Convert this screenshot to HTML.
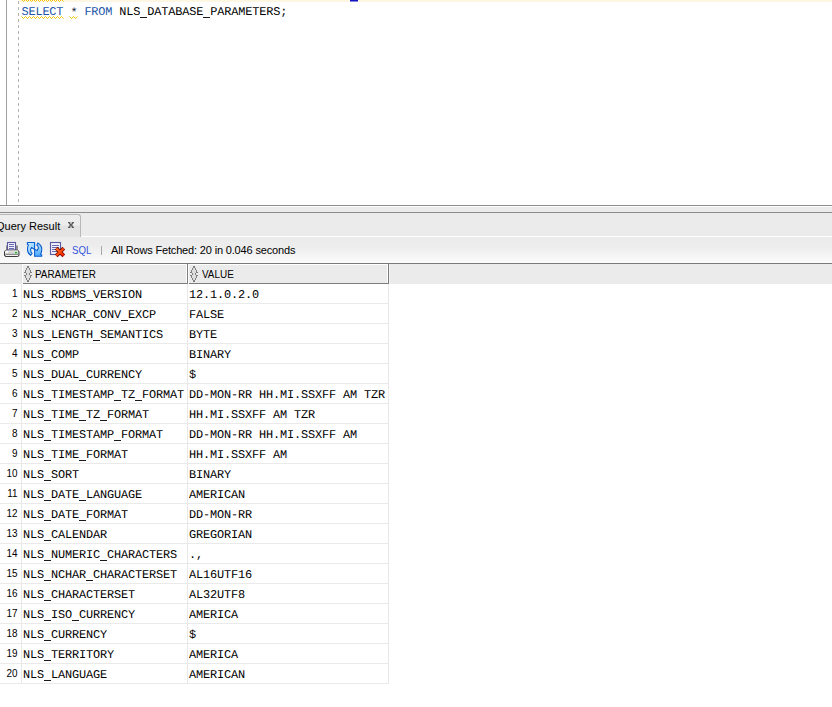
<!DOCTYPE html>
<html><head><meta charset="utf-8"><style>
html,body{margin:0;padding:0;}
body{width:832px;height:707px;overflow:hidden;background:#fff;position:relative;font-family:"Liberation Sans",sans-serif;}
.a{position:absolute;}
.mono{font-family:"Liberation Mono",monospace;}
#gutline{left:6px;top:0;width:1px;height:205px;background:#a0a0a0;}
#dash{left:18px;top:0;width:1px;height:205px;background:repeating-linear-gradient(to bottom,transparent 0 1px,#b4b4b4 1px 4px,transparent 4px 6px);}
#curline{left:19px;top:0;width:813px;height:2px;background:#fdf6e3;}
#code{left:21.4px;top:4px;font-size:11.9px;line-height:16px;white-space:pre;color:#000;}
.kw{color:#2255a8;}
#sep1{left:0;top:205px;width:832px;height:1px;background:#8c8c8c;}
#sep1w{left:0;top:206px;width:832px;height:1px;background:#fff;}
#sep1g{left:0;top:207px;width:832px;height:5px;background:#ebebeb;}
#sep2{left:0;top:212px;width:832px;height:1px;background:#8c8c8c;}
#tabstrip{left:0;top:213px;width:832px;height:23px;background:#ebebeb;}
#tabstripw{left:0;top:236px;width:832px;height:1px;background:#fff;}
#tab{left:-10px;top:214px;width:91px;height:23px;border:1px solid #b8b8b8;border-bottom:none;border-top-right-radius:3px;background:linear-gradient(to bottom,#eeeeee 0,#ececec 10px,#e2e2e2 11px,#e4e4e4 100%);box-sizing:border-box;}
#tabtext{left:-4px;top:219px;font-size:11px;line-height:14px;color:#000;white-space:pre;}
#toolbar{left:0;top:237px;width:832px;height:26px;background:linear-gradient(to bottom,#ebebeb 0,#ededed 35%,#fbfbfb 100%);}
#tbline{left:0;top:263px;width:832px;height:1px;background:#7a7a7a;}
#sqltxt{left:72px;top:243px;font-size:11px;line-height:14px;color:#3352dc;transform:scaleX(0.88);transform-origin:0 0;}
#pipe{left:101px;top:246px;width:1px;height:9px;background:#a8a8a8;}
#fetched{left:111px;top:243px;font-size:11px;line-height:14px;color:#000;white-space:pre;letter-spacing:-0.16px;}
.us{display:inline-block;width:7px;height:1px;background:#1a1a1a;vertical-align:baseline;position:relative;top:3px;letter-spacing:0;}
.c1,.c2,#code{text-rendering:geometricPrecision;}
.c1,.c2,#code{letter-spacing:-0.140px;}
#hdrbg{left:0;top:264px;width:832px;height:20px;background:#ebebeb;}
.htxt{top:267px;font-size:11px;line-height:14px;color:#000;transform:scaleX(0.9);transform-origin:0 0;white-space:pre;}
.rn{position:absolute;left:0;width:17.5px;text-align:right;height:20px;line-height:20px;font-size:11px;color:#000;margin-top:-1px;transform:scaleX(0.9);transform-origin:100% 0;}
.c1,.c2{position:absolute;font-family:"Liberation Mono",monospace;font-size:11.9px;line-height:20px;height:20px;color:#000;white-space:pre;}
.c1{left:23px;}
.c2{left:189px;}
.hl{position:absolute;left:0;width:389px;height:1px;background:#eaeaea;}
.vl{position:absolute;top:284px;width:1px;height:400px;background:#e8e8e8;}
</style></head><body>
<div class="a" id="curline"></div>
<div class="a" id="gutline"></div>
<div class="a" id="dash"></div>
<svg class="a" style="left:0;top:0" width="832" height="30">
<polyline fill="none" stroke="#f8bf00" stroke-width="1" points="21.5,-0.5 23.5,1.5 25.5,-0.5 27.5,1.5 29.5,-0.5 31.5,1.5 33.5,-0.5 35.5,1.5 37.5,-0.5 39.5,1.5 41.5,-0.5 43.5,1.5 45.5,-0.5 47.5,1.5 49.5,-0.5 51.5,1.5 53.5,-0.5 55.5,1.5 57.5,-0.5 59.5,1.5 61.5,-0.5 63.5,1.5"/>
<polyline fill="none" stroke="#f8bf00" stroke-width="1" points="21.5,16.5 23.5,18.5 25.5,16.5 27.5,18.5 29.5,16.5 31.5,18.5 33.5,16.5 35.5,18.5 37.5,16.5 39.5,18.5 41.5,16.5 43.5,18.5 45.5,16.5 47.5,18.5 49.5,16.5 51.5,18.5 53.5,16.5 55.5,18.5 57.5,16.5 59.5,18.5 61.5,16.5 63.5,18.5"/>
<polyline fill="none" stroke="#f8bf00" stroke-width="1" points="69.5,16.5 71.5,18.5 73.5,16.5 75.5,18.5 77.5,16.5"/>
<rect x="350" y="0" width="8" height="1.5" fill="#1414c8"/>
</svg>
<div class="a mono" id="code"><span class="kw">SELECT</span> <span style="position:relative;top:1px;color:#1a1a40">*</span> <span class="kw">FROM</span> NLS<span class="us"></span>DATABASE<span class="us"></span>PARAMETERS;</div>
<div class="a" id="sep1"></div><div class="a" id="sep1w"></div><div class="a" id="sep1g"></div><div class="a" id="sep2"></div>
<div class="a" id="tabstrip"></div><div class="a" id="tabstripw"></div>
<div class="a" id="tab"></div>
<div class="a" id="tabtext">Query Result</div>
<div class="a" id="toolbar"></div>
<div class="a" id="tbline"></div>
<div class="a" id="sqltxt">SQL</div>
<div class="a" id="pipe"></div>
<div class="a" id="fetched">All Rows Fetched: 20 in 0.046 seconds</div>
<div class="a" id="hdrbg"></div>
<div class="a" style="left:21px;top:264px;width:1px;height:20px;background:#e2e2e2"></div>
<div class="a" style="left:22px;top:264px;width:165px;height:1px;background:#fff"></div><div class="a" style="left:22px;top:264px;width:1px;height:20px;background:#fff"></div><div class="a" style="left:186px;top:264px;width:1px;height:19px;background:#fff"></div><div class="a" style="left:187px;top:264px;width:1px;height:20px;background:#7d7d7d"></div><div class="a" style="left:23px;top:283px;width:165px;height:1px;background:#7d7d7d"></div>
<div class="a" style="left:188px;top:264px;width:200px;height:1px;background:#fff"></div><div class="a" style="left:188px;top:264px;width:1px;height:20px;background:#fff"></div><div class="a" style="left:387px;top:264px;width:1px;height:19px;background:#fff"></div><div class="a" style="left:388px;top:264px;width:1px;height:20px;background:#7d7d7d"></div><div class="a" style="left:189px;top:283px;width:200px;height:1px;background:#7d7d7d"></div>
<div class="a" style="left:389px;top:264px;width:1px;height:20px;background:#f4f4f4"></div>
<div class="a htxt" style="left:35px">PARAMETER</div>
<div class="a htxt" style="left:202px">VALUE</div>
<div class="hl" style="top:303px"></div><div class="hl" style="top:323px"></div><div class="hl" style="top:343px"></div><div class="hl" style="top:363px"></div><div class="hl" style="top:383px"></div><div class="hl" style="top:403px"></div><div class="hl" style="top:423px"></div><div class="hl" style="top:443px"></div><div class="hl" style="top:463px"></div><div class="hl" style="top:483px"></div><div class="hl" style="top:503px"></div><div class="hl" style="top:523px"></div><div class="hl" style="top:543px"></div><div class="hl" style="top:563px"></div><div class="hl" style="top:583px"></div><div class="hl" style="top:603px"></div><div class="hl" style="top:623px"></div><div class="hl" style="top:643px"></div><div class="hl" style="top:663px"></div><div class="hl" style="top:683px"></div>
<div class="vl" style="left:21px"></div><div class="vl" style="left:187px"></div><div class="vl" style="left:388px"></div>
<div class="rn" style="top:284px">1</div><div class="c1" style="top:285px">NLS<span class="us"></span>RDBMS<span class="us"></span>VERSION</div><div class="c2" style="top:285px">12.1.0.2.0</div><div class="rn" style="top:304px">2</div><div class="c1" style="top:305px">NLS<span class="us"></span>NCHAR<span class="us"></span>CONV<span class="us"></span>EXCP</div><div class="c2" style="top:305px">FALSE</div><div class="rn" style="top:324px">3</div><div class="c1" style="top:325px">NLS<span class="us"></span>LENGTH<span class="us"></span>SEMANTICS</div><div class="c2" style="top:325px">BYTE</div><div class="rn" style="top:344px">4</div><div class="c1" style="top:345px">NLS<span class="us"></span>COMP</div><div class="c2" style="top:345px">BINARY</div><div class="rn" style="top:364px">5</div><div class="c1" style="top:365px">NLS<span class="us"></span>DUAL<span class="us"></span>CURRENCY</div><div class="c2" style="top:365px">$</div><div class="rn" style="top:384px">6</div><div class="c1" style="top:385px">NLS<span class="us"></span>TIMESTAMP<span class="us"></span>TZ<span class="us"></span>FORMAT</div><div class="c2" style="top:385px">DD-MON-RR HH.MI.SSXFF AM TZR</div><div class="rn" style="top:404px">7</div><div class="c1" style="top:405px">NLS<span class="us"></span>TIME<span class="us"></span>TZ<span class="us"></span>FORMAT</div><div class="c2" style="top:405px">HH.MI.SSXFF AM TZR</div><div class="rn" style="top:424px">8</div><div class="c1" style="top:425px">NLS<span class="us"></span>TIMESTAMP<span class="us"></span>FORMAT</div><div class="c2" style="top:425px">DD-MON-RR HH.MI.SSXFF AM</div><div class="rn" style="top:444px">9</div><div class="c1" style="top:445px">NLS<span class="us"></span>TIME<span class="us"></span>FORMAT</div><div class="c2" style="top:445px">HH.MI.SSXFF AM</div><div class="rn" style="top:464px">10</div><div class="c1" style="top:465px">NLS<span class="us"></span>SORT</div><div class="c2" style="top:465px">BINARY</div><div class="rn" style="top:484px">11</div><div class="c1" style="top:485px">NLS<span class="us"></span>DATE<span class="us"></span>LANGUAGE</div><div class="c2" style="top:485px">AMERICAN</div><div class="rn" style="top:504px">12</div><div class="c1" style="top:505px">NLS<span class="us"></span>DATE<span class="us"></span>FORMAT</div><div class="c2" style="top:505px">DD-MON-RR</div><div class="rn" style="top:524px">13</div><div class="c1" style="top:525px">NLS<span class="us"></span>CALENDAR</div><div class="c2" style="top:525px">GREGORIAN</div><div class="rn" style="top:544px">14</div><div class="c1" style="top:545px">NLS<span class="us"></span>NUMERIC<span class="us"></span>CHARACTERS</div><div class="c2" style="top:545px">.,</div><div class="rn" style="top:564px">15</div><div class="c1" style="top:565px">NLS<span class="us"></span>NCHAR<span class="us"></span>CHARACTERSET</div><div class="c2" style="top:565px">AL16UTF16</div><div class="rn" style="top:584px">16</div><div class="c1" style="top:585px">NLS<span class="us"></span>CHARACTERSET</div><div class="c2" style="top:585px">AL32UTF8</div><div class="rn" style="top:604px">17</div><div class="c1" style="top:605px">NLS<span class="us"></span>ISO<span class="us"></span>CURRENCY</div><div class="c2" style="top:605px">AMERICA</div><div class="rn" style="top:624px">18</div><div class="c1" style="top:625px">NLS<span class="us"></span>CURRENCY</div><div class="c2" style="top:625px">$</div><div class="rn" style="top:644px">19</div><div class="c1" style="top:645px">NLS<span class="us"></span>TERRITORY</div><div class="c2" style="top:645px">AMERICA</div><div class="rn" style="top:664px">20</div><div class="c1" style="top:665px">NLS<span class="us"></span>LANGUAGE</div><div class="c2" style="top:665px">AMERICAN</div>

<svg class="a" style="left:0;top:0" width="832" height="707" viewBox="0 0 832 707">
<defs>
<linearGradient id="pbody" x1="0" y1="0" x2="0" y2="1"><stop offset="0" stop-color="#eeeeee"/><stop offset="0.6" stop-color="#c4c4c4"/><stop offset="1" stop-color="#b0b0b0"/></linearGradient>
<linearGradient id="rblue" x1="0" y1="0" x2="1" y2="1"><stop offset="0" stop-color="#d6efff"/><stop offset="1" stop-color="#6cc0ff"/></linearGradient>
<linearGradient id="rblue2" x1="0" y1="0" x2="0" y2="1"><stop offset="0" stop-color="#b8e0ff"/><stop offset="1" stop-color="#4aa8ff"/></linearGradient>
<linearGradient id="xred" x1="0" y1="0" x2="1" y2="1"><stop offset="0" stop-color="#ff7a20"/><stop offset="1" stop-color="#ff2000"/></linearGradient>
</defs>
<!-- printer -->
<rect x="6" y="245.5" width="12" height="4.5" fill="#8c8c8c"/>
<rect x="7.5" y="242.5" width="8" height="7.5" fill="#f2f2ff" stroke="#5a5aa0" stroke-width="1.1"/>
<rect x="9" y="244" width="5" height="1" fill="#6b6bb0"/>
<rect x="9" y="246" width="5" height="1" fill="#6b6bb0"/>
<rect x="9" y="248" width="5" height="1" fill="#6b6bb0"/>
<path d="M4.5,252 Q4.5,250.3 6.5,250.3 H17 Q19,250.3 19,252 V255 Q19,256.5 17.5,256.5 H6 Q4.5,256.5 4.5,255 Z" fill="url(#pbody)" stroke="#3a3a3a" stroke-width="1"/>
<path d="M5.5,250.5 H18" stroke="#b4b4b4" stroke-width="1"/>
<rect x="5" y="251" width="3" height="2" fill="#ffffff" opacity="0.8"/>
<rect x="6" y="254" width="12" height="1" fill="#8c8c8c"/>
<rect x="6" y="255" width="12" height="1" fill="#f2f2f2"/>
<rect x="15" y="252" width="2" height="1.2" fill="#10c010"/>
<!-- refresh -->
<path d="M27.4,242.5 H34.6 V249.3 L31.5,247.6 L30.5,249.5 Q30.8,252 32.1,253.3 L30.7,255.3 Q27.5,253 27.5,249.5 Q27.5,246.5 28.5,245 L27.4,244.5 Z" fill="url(#rblue)" stroke="#0a5fd0" stroke-width="1.1"/>
<path d="M41.7,256.3 H34.6 V249.3 L37.2,250.5 L38.3,248.3 Q38.6,246.2 36.8,245 L37.9,243 Q41.8,245.5 41.8,249.3 Q41.7,252.5 40.6,254.1 L41.7,255 Z" fill="url(#rblue2)" stroke="#0a5fd0" stroke-width="1.1"/>
<!-- delete -->
<rect x="50.5" y="242.5" width="10" height="12" fill="#f0f0ff" stroke="#5a5aa0" stroke-width="1.1"/>
<rect x="52" y="245" width="7" height="1" fill="#6b6bb0"/>
<rect x="52" y="247" width="7" height="1" fill="#6b6bb0"/>
<rect x="52" y="249" width="7" height="1" fill="#6b6bb0"/>
<rect x="52" y="251" width="7" height="1" fill="#6b6bb0"/>
<path d="M56.2,248.2 L63.8,255.8 M63.8,248.2 L56.2,255.8" stroke="#7a0800" stroke-width="3.9" stroke-linecap="butt"/>
<path d="M56.4,248.4 L63.6,255.6 M63.6,248.4 L56.4,255.6" stroke="url(#xred)" stroke-width="2.1" stroke-linecap="butt"/>
<!-- tab close x -->
<path d="M69,223 L73,227 M73,223 L69,227" stroke="#5c5c5c" stroke-width="1.5"/><path d="M68,222.5 H70.3 M71.7,222.5 H74 M68,227.5 H70.3 M71.7,227.5 H74" stroke="#5c5c5c" stroke-width="1"/>
<rect x="27" y="268" width="2" height="2" fill="#dedede"/><rect x="26" y="270" width="4" height="3" fill="#dedede"/><rect x="27" y="273" width="2" height="2" fill="#dedede"/><rect x="26" y="275" width="4" height="3" fill="#dedede"/><rect x="27" y="278" width="2" height="2" fill="#dedede"/><rect x="27" y="266" width="2" height="2" fill="#808080"/><rect x="26" y="268" width="1" height="2" fill="#808080"/><rect x="29" y="268" width="1" height="2" fill="#808080"/><rect x="25" y="270" width="1" height="2" fill="#808080"/><rect x="30" y="270" width="1" height="2" fill="#808080"/><rect x="24" y="272" width="2" height="1" fill="#808080"/><rect x="30" y="272" width="2" height="1" fill="#808080"/><rect x="26" y="273" width="1" height="2" fill="#808080"/><rect x="29" y="273" width="1" height="2" fill="#808080"/><rect x="24" y="275" width="2" height="1" fill="#808080"/><rect x="30" y="275" width="2" height="1" fill="#808080"/><rect x="25" y="276" width="1" height="2" fill="#808080"/><rect x="30" y="276" width="1" height="2" fill="#808080"/><rect x="26" y="278" width="1" height="2" fill="#808080"/><rect x="29" y="278" width="1" height="2" fill="#808080"/><rect x="27" y="280" width="2" height="2" fill="#808080"/><rect x="193" y="268" width="2" height="2" fill="#dedede"/><rect x="192" y="270" width="4" height="3" fill="#dedede"/><rect x="193" y="273" width="2" height="2" fill="#dedede"/><rect x="192" y="275" width="4" height="3" fill="#dedede"/><rect x="193" y="278" width="2" height="2" fill="#dedede"/><rect x="193" y="266" width="2" height="2" fill="#808080"/><rect x="192" y="268" width="1" height="2" fill="#808080"/><rect x="195" y="268" width="1" height="2" fill="#808080"/><rect x="191" y="270" width="1" height="2" fill="#808080"/><rect x="196" y="270" width="1" height="2" fill="#808080"/><rect x="190" y="272" width="2" height="1" fill="#808080"/><rect x="196" y="272" width="2" height="1" fill="#808080"/><rect x="192" y="273" width="1" height="2" fill="#808080"/><rect x="195" y="273" width="1" height="2" fill="#808080"/><rect x="190" y="275" width="2" height="1" fill="#808080"/><rect x="196" y="275" width="2" height="1" fill="#808080"/><rect x="191" y="276" width="1" height="2" fill="#808080"/><rect x="196" y="276" width="1" height="2" fill="#808080"/><rect x="192" y="278" width="1" height="2" fill="#808080"/><rect x="195" y="278" width="1" height="2" fill="#808080"/><rect x="193" y="280" width="2" height="2" fill="#808080"/>
</svg>

</body></html>
